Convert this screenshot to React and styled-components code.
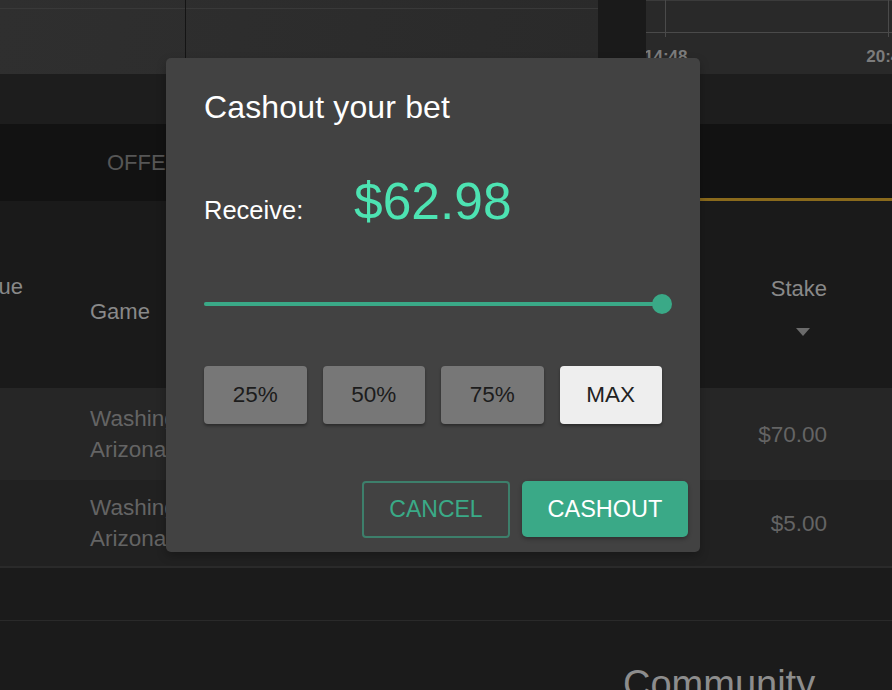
import React, { useState } from "react";
import styled, { createGlobalStyle } from "styled-components";

const GlobalStyle = createGlobalStyle`
  html, body {
    margin: 0;
    padding: 0;
    background: #1b1b1b;
  }
  body {
    font-family: "Liberation Sans", Arial, sans-serif;
    overflow: hidden;
  }
  * {
    box-sizing: border-box;
  }
`;

const Page = styled.div`
  position: relative;
  width: 892px;
  height: 690px;
  overflow: hidden;
  background: #1b1b1b;
`;

/* ---------- background app ---------- */

const TopStrip = styled.div`
  display: flex;
  height: 74px;
`;

const BetPanel = styled.div`
  display: flex;
  width: 598px;
  background: linear-gradient(
      to bottom,
      transparent 8px,
      #393939 8px,
      #393939 9px,
      transparent 9px
    ),
    linear-gradient(100deg, #2f2f2f, #2a2a2a);
`;

const PanelCell = styled.div`
  flex: ${(p) => (p.$width ? "none" : 1)};
  width: ${(p) => (p.$width ? `${p.$width}px` : "auto")};
  border-right: ${(p) => (p.$divider ? "1px solid #141414" : "none")};
`;

const Gutter = styled.div`
  width: 48px;
  background: #1a1a1a;
`;

const Chart = styled.div`
  flex: 1;
  overflow: hidden;
  background: #292929;

  svg {
    display: block;
  }
`;

const Band = styled.div`
  height: 50px;
  background: #1d1d1d;
`;

const Tabs = styled.div`
  display: grid;
  grid-template-columns: 1fr 1fr;
  height: 77px;
  background: #121212;
`;

const Tab = styled.div`
  display: flex;
  align-items: center;
  padding: 4px 0 0 107px;
  font-size: 22px;
  line-height: 22px;
  color: #565656;
  border-bottom: 3px solid ${(p) => (p.$active ? "#8a6a1c" : "transparent")};
`;

const HeaderRow = styled.div`
  display: flex;
  align-items: flex-start;
  height: 187px;
  background: #1a1a1a;
  color: #898989;
  font-size: 22px;
  line-height: 22px;
`;

const ValueCell = styled.div`
  display: flex;
  justify-content: flex-end;
  width: 23px;
  white-space: nowrap;
  padding-top: ${(p) => p.$top || 0}px;
`;

const GameCell = styled.div`
  margin-left: 67px;
  white-space: nowrap;
  padding-top: ${(p) => p.$top || 0}px;
`;

const StakeHead = styled.div`
  display: flex;
  flex-direction: column;
  align-items: center;
  margin-left: auto;
  margin-right: 65px;
  padding-top: 77px;
`;

const SortArrow = styled.span`
  width: 0;
  height: 0;
  margin: 28px 0 0 9px;
  border-left: 7.5px solid transparent;
  border-right: 7.5px solid transparent;
  border-top: 8px solid #6b6b6b;
`;

const BetRow = styled.div`
  display: flex;
  align-items: center;
  height: ${(p) => p.$height}px;
  background: ${(p) => p.$bg};
  border-bottom: ${(p) => (p.$last ? "2px solid #2a2a2a" : "none")};
  color: #646464;
  font-size: 22.5px;
  line-height: 31px;
`;

const StakeCell = styled.div`
  margin-left: auto;
  margin-right: 65px;
  text-align: right;
`;

const Filler = styled.div`
  height: 53px;
  background: #1b1b1b;
  border-bottom: 1px solid #2a2a2a;
`;

const Community = styled.div`
  padding: 44px 0 0 623px;
  font-size: 38px;
  line-height: 38px;
  color: #8d8d8d;
  white-space: nowrap;
`;

/* ---------- dialog ---------- */

const Dialog = styled.div`
  position: absolute;
  top: 58px;
  left: 166px;
  width: 534px;
  height: 494px;
  display: flex;
  flex-direction: column;
  background: #424242;
  border-radius: 5px;
  box-shadow: 0 4px 10px rgba(0, 0, 0, 0.25);
`;

const DialogBody = styled.div`
  padding: 34px 38px 0;
`;

const Title = styled.h2`
  margin: 0;
  font-size: 32px;
  line-height: 31px;
  font-weight: 400;
  letter-spacing: 0.15px;
  color: #ffffff;
`;

const ReceiveRow = styled.div`
  display: flex;
  align-items: baseline;
  margin-top: 53px;
`;

const ReceiveLabel = styled.span`
  width: 150px;
  font-size: 25.5px;
  line-height: 25px;
  color: #ffffff;
`;

const Amount = styled.span`
  font-size: 51.5px;
  line-height: 51px;
  color: #4de3b2;
`;

const SliderRoot = styled.div`
  position: relative;
  height: 20px;
  margin-top: 67px;
`;

const SliderTrack = styled.div`
  position: absolute;
  top: 8px;
  left: 0;
  right: 0;
  height: 4px;
  border-radius: 2px;
  background: rgba(58, 169, 135, 0.3);
`;

const SliderFill = styled.div`
  position: absolute;
  top: 8px;
  left: 0;
  height: 4px;
  border-radius: 2px;
  background: #3aa987;
`;

const SliderThumb = styled.div`
  position: absolute;
  top: 0;
  width: 20px;
  height: 20px;
  border-radius: 50%;
  background: #3aa987;
`;

const PresetRow = styled.div`
  display: flex;
  gap: 16px;
  margin-top: 52px;
`;

const Preset = styled.button`
  flex: 1;
  height: 58px;
  padding: 0;
  border: none;
  border-radius: 4px;
  font-family: inherit;
  font-size: 22.5px;
  color: ${(p) => (p.$active ? "#222222" : "#1c1c1c")};
  background: ${(p) => (p.$active ? "#eeeeee" : "#777777")};
  box-shadow: 0 2px 3px rgba(0, 0, 0, 0.35);
  cursor: pointer;
`;

const Actions = styled.div`
  display: flex;
  justify-content: flex-end;
  gap: 12px;
  margin-top: auto;
  padding: 0 12px 14px 0;
`;

const OutlineButton = styled.button`
  width: 148px;
  height: 57px;
  border: 2px solid rgba(58, 169, 135, 0.6);
  border-radius: 4px;
  background: transparent;
  font-family: inherit;
  font-size: 23px;
  color: #3aaa87;
  cursor: pointer;
`;

const PrimaryButton = styled.button`
  width: 166px;
  height: 56px;
  border: none;
  border-radius: 5px;
  background: #3aa987;
  font-family: inherit;
  font-size: 23.5px;
  color: #ffffff;
  box-shadow: 0 2px 4px rgba(0, 0, 0, 0.3);
  cursor: pointer;
`;

const MAX_CASHOUT = 62.98;

const presets = [
  { label: "25%", value: 25 },
  { label: "50%", value: 50 },
  { label: "75%", value: 75 },
  { label: "MAX", value: 100 },
];

const bets = [
  { home: "Washington Redskins", away: "Arizona Cardinals", stake: "$70.00", height: 92, bg: "#262626" },
  { home: "Washington Redskins", away: "Arizona Cardinals", stake: "$5.00", height: 88, bg: "#212121", last: true },
];

const PriceChart = () => (
  <svg width="246" height="74">
    <line x1="0" y1="0.5" x2="246" y2="0.5" stroke="#3b3b3b" />
    <line x1="0" y1="32.5" x2="246" y2="32.5" stroke="#4a4a4a" />
    <line x1="19.5" y1="0" x2="19.5" y2="37" stroke="#4a4a4a" />
    <line x1="242.5" y1="0" x2="242.5" y2="37" stroke="#4a4a4a" />
    <text
      x="19.7"
      y="61.5"
      textAnchor="middle"
      fontFamily="Liberation Sans, Arial, sans-serif"
      fontWeight="700"
      fontSize="17"
      fill="#7c7c7c"
    >
      14:48
    </text>
    <text
      x="242"
      y="61.5"
      textAnchor="middle"
      fontFamily="Liberation Sans, Arial, sans-serif"
      fontWeight="700"
      fontSize="17"
      fill="#7c7c7c"
    >
      20:48
    </text>
  </svg>
);

export default function App() {
  const [percent, setPercent] = useState(100);
  const amount = ((MAX_CASHOUT * percent) / 100).toFixed(2);

  return (
    <Page>
      <GlobalStyle />
      <TopStrip>
        <BetPanel>
          <PanelCell $width={186} $divider />
          <PanelCell />
        </BetPanel>
        <Gutter />
        <Chart>
          <PriceChart />
        </Chart>
      </TopStrip>
      <Band />
      <Tabs>
        <Tab>OFFERS</Tab>
        <Tab $active>MY BETS</Tab>
      </Tabs>
      <HeaderRow>
        <ValueCell $top={75}>Value</ValueCell>
        <GameCell $top={100}>Game</GameCell>
        <StakeHead>
          Stake
          <SortArrow />
        </StakeHead>
      </HeaderRow>
      {bets.map((bet, i) => (
        <BetRow key={i} $height={bet.height} $bg={bet.bg} $last={bet.last}>
          <ValueCell />
          <GameCell>
            {bet.home}
            <br />
            {bet.away}
          </GameCell>
          <StakeCell>{bet.stake}</StakeCell>
        </BetRow>
      ))}
      <Filler />
      <Community>Community</Community>

      <Dialog role="dialog">
        <DialogBody>
          <Title>Cashout your bet</Title>
          <ReceiveRow>
            <ReceiveLabel>Receive:</ReceiveLabel>
            <Amount>${amount}</Amount>
          </ReceiveRow>
          <SliderRoot>
            <SliderTrack />
            <SliderFill style={{ width: `${percent}%` }} />
            <SliderThumb style={{ left: `calc(${percent}% - 10px)` }} />
          </SliderRoot>
          <PresetRow>
            {presets.map((p) => (
              <Preset
                key={p.label}
                $active={percent === p.value}
                onClick={() => setPercent(p.value)}
              >
                {p.label}
              </Preset>
            ))}
          </PresetRow>
        </DialogBody>
        <Actions>
          <OutlineButton>CANCEL</OutlineButton>
          <PrimaryButton>CASHOUT</PrimaryButton>
        </Actions>
      </Dialog>
    </Page>
  );
}
